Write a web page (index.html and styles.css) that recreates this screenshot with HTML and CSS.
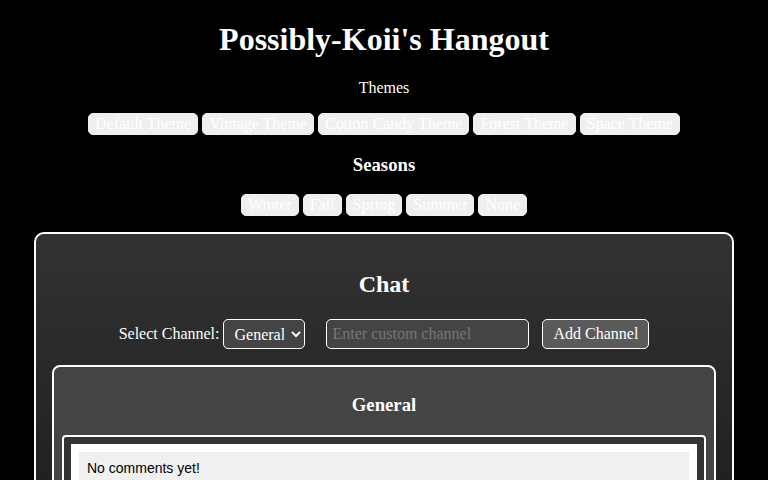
FILE: index.html
```html
<!DOCTYPE html>
<html lang="en">
<head>
    <meta charset="UTF-8">
    <meta name="viewport" content="width=device-width, initial-scale=1.0">
    <title>Possibly-Koii's Hangout</title>
    <link rel="stylesheet" href="styles.css">
</head>
<body>
    <h1>Possibly-Koii's Hangout</h1>

    <p class="label">Themes</p>
    <div class="button-row">
        <button>Default Theme</button>
        <button>Vintage Theme</button>
        <button>Cotton Candy Theme</button>
        <button>Forest Theme</button>
        <button>Space Theme</button>
    </div>

    <h3>Seasons</h3>
    <div class="button-row">
        <button>Winter</button>
        <button>Fall</button>
        <button>Spring</button>
        <button>Summer</button>
        <button>None</button>
    </div>

    <section class="chat">
        <h2>Chat</h2>
        <div class="channel-controls">
            <label for="channelSelect">Select Channel:</label>
            <select id="channelSelect">
                <option>General</option>
            </select>
            <input type="text" id="customChannel" placeholder="Enter custom channel">
            <button id="addChannel">Add Channel</button>
        </div>

        <div class="channel">
            <h3>General</h3>
            <div class="comment-box">
                <div class="comment-list">
                    <div class="comment">No comments yet!</div>
                </div>
            </div>
        </div>
    </section>
</body>
</html>
```

FILE: styles.css
```css
body {
    margin: 0 8px;
    background-color: #000;
    color: #fff;
    font-family: 'Liberation Serif', 'Times New Roman', serif;
    text-align: center;
}

h1 {
    font-size: 32px;
    margin: 20.5px 0 21.5px;
}

.label {
    margin: 16px 0;
}

.button-row {
    display: flex;
    justify-content: center;
    gap: 4px;
}

.button-row button {
    font-family: inherit;
    font-size: 16px;
    color: #fff;
    background: #efefef;
    border: 1px solid #efefef;
    border-radius: 5px;
    padding: 1px 6px;
}

.chat {
    box-sizing: border-box;
    max-width: 700px;
    margin: 16px auto 0;
    padding: 17px 16px 16px;
    border: 2px solid #fff;
    border-radius: 10px;
    background: linear-gradient(#333 0, #222 230px, #1e1e1e 100%);
}

.chat h2 {
    margin: 20px 0 21px;
}

.channel-controls {
    display: flex;
    justify-content: center;
    align-items: center;
    margin-bottom: 16px;
}

.channel-controls label {
    margin-right: 4px;
}

.channel-controls select,
.channel-controls input,
.channel-controls button {
    box-sizing: border-box;
    height: 30px;
    font-family: inherit;
    font-size: 16px;
    color: #fff;
    background: #444;
    border: 1px solid #fff;
    border-radius: 5px;
}

.channel-controls select {
    width: 82px;
    padding: 0 4px 0 6px;
    margin-right: 21px;
}

.channel-controls input {
    width: 203px;
    padding: 0 5px;
    margin-right: 13px;
}

.channel-controls input::placeholder {
    color: #777;
}

.channel-controls button {
    padding: 0 10px;
    background: #5a5a5a;
}

.channel {
    background: #444;
    border: 2px solid #fff;
    border-radius: 8px;
    padding: 8px;
}

.channel h3 {
    margin: 18.5px 0 19.5px;
}

.comment-box {
    background: #333;
    border: 2px solid #fff;
    border-radius: 4px;
    padding: 7px;
}

.comment-list {
    background: #fff;
    padding: 8px;
}

.comment {
    background: #f0f0f0;
    color: #000;
    font-family: 'Liberation Sans', Arial, sans-serif;
    font-size: 14px;
    text-align: left;
    padding: 8px;
}
```
